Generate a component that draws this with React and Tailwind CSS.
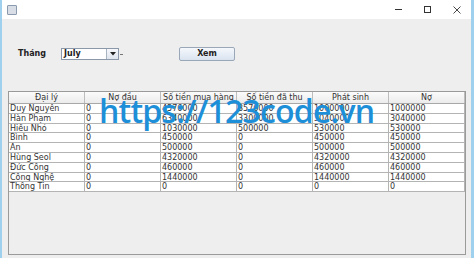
const columns = ["Đại lý", "Nợ đầu", "Số tiền mua hàng", "Số tiền đã thu", "Phát sinh", "Nợ"];

const rows = [
  ["Duy Nguyễn", "0", "4576000", "3576000", "1000000", "1000000"],
  ["Hàn Phạm", "0", "6340000", "3300000", "3040000", "3040000"],
  ["Hiếu Nhỏ", "0", "1030000", "500000", "530000", "530000"],
  ["Bình", "0", "450000", "0", "450000", "450000"],
  ["An", "0", "500000", "0", "500000", "500000"],
  ["Hùng Seol", "0", "4320000", "0", "4320000", "4320000"],
  ["Đức Cống", "0", "460000", "0", "460000", "460000"],
  ["Công Nghệ", "0", "1440000", "0", "1440000", "1440000"],
  ["Thông Tin", "0", "0", "0", "0", "0"],
];

const font = { fontFamily: '"DejaVu Sans", "Liberation Sans", sans-serif' };

export default function App() {
  return (
    <div className="relative w-[474px] h-[258px] overflow-hidden flex bg-[#eeeeee]" style={font}>
      {/* window left edge */}
      <div className="w-[2px] bg-[#9fd0ee]" />

      <div className="flex-1 flex flex-col">
        {/* title bar */}
        <div className="h-[19px] bg-white flex items-center">
          <div className="ml-[5px] w-[10px] h-[10px] border border-[#8a9bb0] bg-[#d8dde6] rounded-[1px]" />
          <div className="ml-auto flex items-center text-[#333]">
            <div className="w-[29px] flex justify-center">
              <div className="w-[7px] h-px bg-[#333]" />
            </div>
            <div className="w-[29px] flex justify-center">
              <div className="w-[7px] h-[7px] border border-[#333]" />
            </div>
            <div className="w-[29px] flex justify-center">
              <svg width="8" height="8" viewBox="0 0 8 8">
                <path d="M0.5 0.5 L7.5 7.5 M7.5 0.5 L0.5 7.5" stroke="#333" strokeWidth="0.9" />
              </svg>
            </div>
          </div>
        </div>

        {/* form row */}
        <div className="flex items-center mt-[28px] h-[14px] text-[8px] text-[#222]">
          <span className="ml-[16px] w-[43px] font-bold">Tháng</span>
          <div className="flex h-[12px] w-[58px] border border-[#8b98aa] bg-white">
            <span className="flex-1 pl-[2px] font-bold leading-[10px]">July</span>
            <div className="w-[12px] border-l border-[#a8b3c2] bg-gradient-to-b from-[#f6f8fb] to-[#dfe5ee] flex items-center justify-center">
              <svg width="6" height="4" viewBox="0 0 6 4">
                <path d="M0 0 H6 L3 3.5 Z" fill="#222" />
              </svg>
            </div>
          </div>
          <div className="ml-[1px] w-[3px] h-px bg-[#777]" />
          <div className="ml-[56px] w-[56px] h-[14px] border border-[#9aa7b8] rounded-[2px] bg-gradient-to-b from-[#f5f8fc] to-[#d9e3ef] flex items-center justify-center font-bold">
            Xem
          </div>
        </div>

        {/* table scroll pane */}
        <div className="mt-[30px] ml-[6px] w-[458px] h-[164px] border border-[#9a9a9a] bg-[#eeeeee] flex flex-col text-[8px] text-[#333]">
          <div className="grid grid-cols-[repeat(6,76px)] h-[12px] bg-gradient-to-b from-[#fbfbfb] to-[#ececec] border-b border-[#a8a8a8]">
            {columns.map((c) => (
              <div key={c} className="border-r border-[#bdbdbd] text-center leading-[12px] truncate">
                {c}
              </div>
            ))}
          </div>
          {rows.map((row, i) => (
            <div key={i} className="grid grid-cols-[repeat(6,76px)] h-[9.8px] bg-white border-b border-[#b4b4b4]">
              {row.map((cell, j) => (
                <div key={j} className="border-r border-[#b4b4b4] pl-[1px] leading-[9px] whitespace-nowrap overflow-hidden">
                  {cell}
                </div>
              ))}
            </div>
          ))}
        </div>
      </div>

      {/* window right edge */}
      <div className="w-[3px] bg-[#9fd0ee]" />

      {/* watermark */}
      <div
        className="absolute left-[99px] top-[91px] text-[32px] font-semibold tracking-[-0.8px] leading-[40px] text-[#1d8fd8] whitespace-nowrap"
        style={{ fontFamily: '"Open Sans", "Liberation Sans", sans-serif' }}
      >
        https://123code.vn
      </div>
    </div>
  );
}
